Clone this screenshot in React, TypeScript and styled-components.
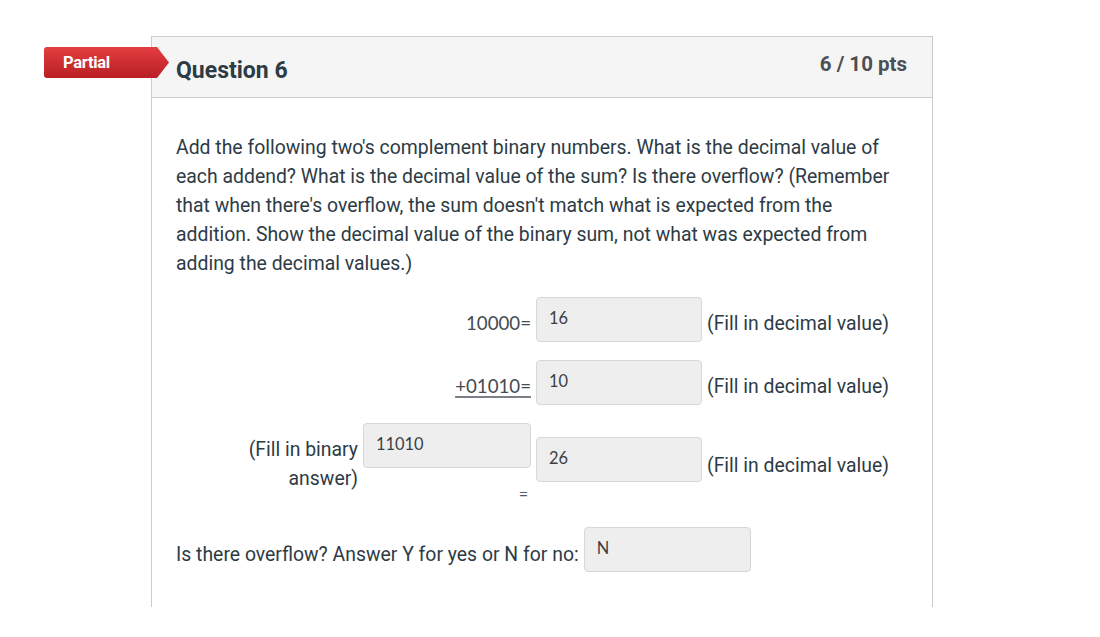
import React from 'react';
import styled, { createGlobalStyle } from 'styled-components';

const GlobalStyle = createGlobalStyle`
  html, body {
    margin: 0;
    padding: 0;
    background: #ffffff;
  }
  body {
    font-family: Roboto, "Liberation Sans", sans-serif;
    color: #2d3b45;
  }
`;

const Page = styled.div`
  position: relative;
  width: 1100px;
  height: 637px;
  padding: 36px 0 0 151px;
  box-sizing: border-box;
`;

const Card = styled.div`
  width: 782px;
  height: 571px;
  box-sizing: border-box;
  border: 1px solid #c7cdd1;
  border-bottom: none;
  display: flex;
  flex-direction: column;
`;

const Header = styled.div`
  height: 61px;
  box-sizing: border-box;
  background: #f5f5f5;
  border-bottom: 1px solid #c7cdd1;
  display: flex;
  justify-content: space-between;
  align-items: flex-start;
  padding: 0 25px 0 24px;
`;

const Title = styled.h2`
  margin: 20px 0 0;
  font-size: 23px;
  line-height: 28px;
  font-weight: 700;
  color: #2d3b45;
`;

const Points = styled.div`
  margin-top: 14px;
  font-size: 20.5px;
  line-height: 26px;
  font-weight: 700;
  color: #4b4f56;
`;

const Banner = styled.div`
  position: absolute;
  left: 44px;
  top: 47px;
  width: 125px;
  height: 31px;
  box-sizing: border-box;
  padding-left: 19px;
  display: flex;
  align-items: center;
  background: linear-gradient(#e33d3f, #b91f24);
  clip-path: polygon(0 0, 113px 0, 125px 50%, 113px 100%, 0 100%);
  border-radius: 3px 0 0 3px;
  color: #ffffff;
  font-size: 16.5px;
  font-weight: 700;
  letter-spacing: -0.3px;
`;

const Body = styled.div`
  padding: 35px 24px 0;
`;

const Prompt = styled.p`
  margin: 0;
  font-size: 19.4px;
  line-height: 29px;
  color: #2d3b45;
`;

const Sum = styled.div`
  margin-top: 19px;
  display: grid;
  grid-template-columns: 182px 168px 166px auto;
  column-gap: 5px;
  row-gap: 18px;
`;

const Cell = styled.div<{ $top?: number; $right?: boolean }>`
  padding-top: ${(p) => p.$top ?? 0}px;
  text-align: ${(p) => (p.$right ? 'right' : 'left')};
  font-size: 19.4px;
  line-height: 29px;
  color: #2d3b45;
  white-space: nowrap;
`;

const Operand = styled.span<{ $underline?: boolean }>`
  font-family: Lato, "Liberation Sans", sans-serif;
  font-size: 18.7px;
  color: #444b52;
  text-decoration: ${(p) => (p.$underline ? 'underline' : 'none')};
  text-decoration-thickness: 2px;
  text-decoration-color: #7a8086;
  text-underline-offset: 3px;
`;

const Field = styled.div<{ $top?: number }>`
  margin-top: ${(p) => p.$top ?? 0}px;
  height: 45px;
  box-sizing: border-box;
  background: #eeeeee;
  border: 1px solid #d5d7d9;
  border-radius: 4px;
  padding: 10px 12px 0;
  font-family: Lato, "Liberation Sans", sans-serif;
  font-size: 16.4px;
  line-height: 20px;
  color: #3a3f45;
`;

const Equals = styled.div`
  margin-top: 16px;
  padding-right: 3px;
  text-align: right;
  font-family: Lato, "Liberation Sans", sans-serif;
  font-size: 16px;
  line-height: 20px;
  color: #555b61;
`;

const OverflowRow = styled.div`
  margin-top: 23px;
  display: flex;
  align-items: center;
  gap: 5px;
`;

const OverflowLabel = styled.span`
  padding-top: 9px;
  font-size: 19.4px;
  line-height: 29px;
  color: #2d3b45;
`;

const OverflowField = styled(Field)`
  width: 167px;
  height: 45px;
`;

const App: React.FC = () => {
  return (
    <>
      <GlobalStyle />
      <Page>
        <Banner>Partial</Banner>
        <Card>
          <Header>
            <Title>Question 6</Title>
            <Points>6 / 10 pts</Points>
          </Header>
          <Body>
            <Prompt>
              Add the following two's complement binary numbers. What is the decimal value of
              each addend? What is the decimal value of the sum? Is there overflow? (Remember
              that when there's overflow, the sum doesn't match what is expected from the
              addition. Show the decimal value of the binary sum, not what was expected from
              adding the decimal values.)
            </Prompt>
            <Sum>
              <Cell />
              <Cell $top={12} $right>
                <Operand>10000=</Operand>
              </Cell>
              <Field>16</Field>
              <Cell $top={12}>(Fill in decimal value)</Cell>

              <Cell />
              <Cell $top={12} $right>
                <Operand $underline>+01010=</Operand>
              </Cell>
              <Field>10</Field>
              <Cell $top={12}>(Fill in decimal value)</Cell>

              <Cell $top={12} $right>
                (Fill in binary
                <br />
                answer)
              </Cell>
              <div>
                <Field>11010</Field>
                <Equals>=</Equals>
              </div>
              <Field $top={14}>26</Field>
              <Cell $top={28}>(Fill in decimal value)</Cell>
            </Sum>
            <OverflowRow>
              <OverflowLabel>Is there overflow? Answer Y for yes or N for no:</OverflowLabel>
              <OverflowField>N</OverflowField>
            </OverflowRow>
          </Body>
        </Card>
      </Page>
    </>
  );
};

export default App;
